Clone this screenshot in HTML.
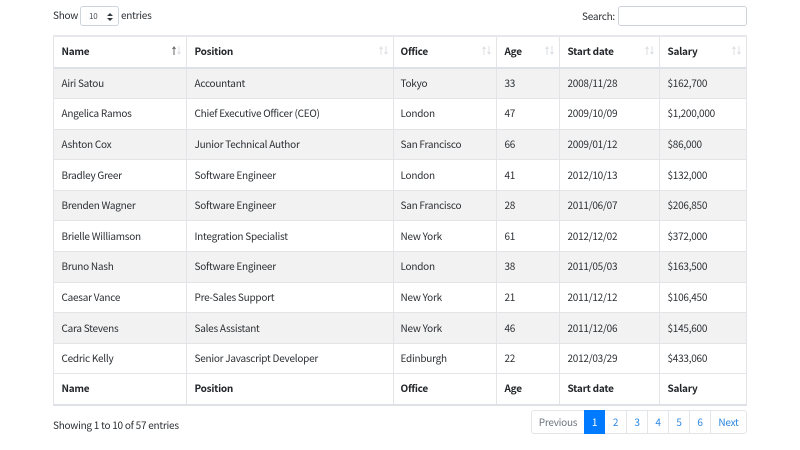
<!DOCTYPE html>
<html><head><meta charset="utf-8"><style>
html,body{margin:0;padding:0;width:800px;height:450px;overflow:hidden;background:#fff;}
body{font-family:"Noto Sans CJK SC","Liberation Sans",sans-serif;font-size:10px;letter-spacing:-0.25px;color:#2b2f33;position:relative;}
.a{position:absolute;white-space:nowrap;line-height:14px;}
table{position:absolute;left:53px;top:35px;width:694px;border-collapse:collapse;table-layout:fixed;border:1px solid #e2e4e7;line-height:14px;}
th,td{padding:0 0 1px 7.5px;border:1px solid #e2e4e7;text-align:left;height:30.6px;box-sizing:border-box;white-space:nowrap;position:relative;}
th:nth-child(3),td:nth-child(3){padding-left:6.5px;}
thead th{border-top:2px solid #e6e8eb;border-bottom:2px solid #dee2e6;height:32px;padding-bottom:3px;}
tfoot th{border-bottom:2px solid #dee2e6;}
th{font-weight:bold;color:#212529;}
tbody tr:nth-child(odd) td{background:#f2f2f2;}
.s{position:absolute;right:5px;top:9px;display:block;}
.sel{position:absolute;left:80px;top:6px;width:37px;height:18px;border:1px solid #ced4da;border-radius:3px;font-size:8px;line-height:19px;text-indent:8px;color:#495057;}
.sel svg{position:absolute;left:26px;top:6px;}
.inp{position:absolute;left:618px;top:6px;width:127px;height:18px;border:1px solid #ced4da;border-radius:3px;}
.pg{position:absolute;left:531px;top:410px;height:22px;display:flex;border:1px solid #e3e6e9;border-radius:3px;}
.pg span{display:block;line-height:22px;text-align:center;color:#2a86e0;border-left:1px solid #e3e6e9;box-sizing:border-box;height:22px;}
.pg span:first-child{border-left:0;color:#6c757d;}
.pg span.on{background:#007bff;color:#fff;height:24px;margin-top:-1px;line-height:24px;border:0;}
</style></head><body>
<div class="a" style="left:53px;top:8px;">Show</div>
<div class="sel">10<svg width="6" height="8" viewBox="0 0 6 8"><path d="M3 0L6 3H0ZM3 8L0 5H6Z" fill="#343a40"/></svg></div>
<div class="a" style="left:121px;top:8px;">entries</div>
<div class="a" style="left:582px;top:9px;">Search:</div>
<div class="inp"></div>
<table>
<colgroup><col style="width:133px"><col style="width:207px"><col style="width:103px"><col style="width:63px"><col style="width:100px"><col style="width:87px"></colgroup>
<thead><tr>
<th>Name<svg class="s" width="9" height="9" viewBox="0 0 9 9" fill="none" stroke-width="1"><path d="M2 9V1M0.5 3L2 1L3.5 3" stroke="#666"/><path d="M7 0V8M5.5 6L7 8L8.5 6" stroke="#dcdfe2"/></svg></th>
<th>Position<svg class="s" width="9" height="9" viewBox="0 0 9 9" fill="none"><path d="M2 9V1M0.5 3L2 1L3.5 3M7 0V8M5.5 6L7 8L8.5 6" stroke="#dcdfe2"/></svg></th>
<th>Office<svg class="s" width="9" height="9" viewBox="0 0 9 9" fill="none"><path d="M2 9V1M0.5 3L2 1L3.5 3M7 0V8M5.5 6L7 8L8.5 6" stroke="#dcdfe2"/></svg></th>
<th>Age<svg class="s" width="9" height="9" viewBox="0 0 9 9" fill="none"><path d="M2 9V1M0.5 3L2 1L3.5 3M7 0V8M5.5 6L7 8L8.5 6" stroke="#dcdfe2"/></svg></th>
<th>Start date<svg class="s" width="9" height="9" viewBox="0 0 9 9" fill="none"><path d="M2 9V1M0.5 3L2 1L3.5 3M7 0V8M5.5 6L7 8L8.5 6" stroke="#dcdfe2"/></svg></th>
<th>Salary<svg class="s" width="9" height="9" viewBox="0 0 9 9" fill="none"><path d="M2 9V1M0.5 3L2 1L3.5 3M7 0V8M5.5 6L7 8L8.5 6" stroke="#dcdfe2"/></svg></th>
</tr></thead>
<tbody>
<tr><td>Airi Satou</td><td>Accountant</td><td>Tokyo</td><td>33</td><td>2008/11/28</td><td>$162,700</td></tr>
<tr><td>Angelica Ramos</td><td>Chief Executive Officer (CEO)</td><td>London</td><td>47</td><td>2009/10/09</td><td>$1,200,000</td></tr>
<tr><td>Ashton Cox</td><td>Junior Technical Author</td><td>San Francisco</td><td>66</td><td>2009/01/12</td><td>$86,000</td></tr>
<tr><td>Bradley Greer</td><td>Software Engineer</td><td>London</td><td>41</td><td>2012/10/13</td><td>$132,000</td></tr>
<tr><td>Brenden Wagner</td><td>Software Engineer</td><td>San Francisco</td><td>28</td><td>2011/06/07</td><td>$206,850</td></tr>
<tr><td>Brielle Williamson</td><td>Integration Specialist</td><td>New York</td><td>61</td><td>2012/12/02</td><td>$372,000</td></tr>
<tr><td>Bruno Nash</td><td>Software Engineer</td><td>London</td><td>38</td><td>2011/05/03</td><td>$163,500</td></tr>
<tr><td>Caesar Vance</td><td>Pre-Sales Support</td><td>New York</td><td>21</td><td>2011/12/12</td><td>$106,450</td></tr>
<tr><td>Cara Stevens</td><td>Sales Assistant</td><td>New York</td><td>46</td><td>2011/12/06</td><td>$145,600</td></tr>
<tr><td>Cedric Kelly</td><td>Senior Javascript Developer</td><td>Edinburgh</td><td>22</td><td>2012/03/29</td><td>$433,060</td></tr>
</tbody>
<tfoot><tr><th>Name</th><th>Position</th><th>Office</th><th>Age</th><th>Start date</th><th>Salary</th></tr></tfoot>
</table>
<div class="a" style="left:53px;top:418px;">Showing 1 to 10 of 57 entries</div>
<div class="pg"><span style="width:52px">Previous</span><span class="on" style="width:21px">1</span><span style="width:21px;border-left:0">2</span><span style="width:21px">3</span><span style="width:21px">4</span><span style="width:21px">5</span><span style="width:21px">6</span><span style="width:36px">Next</span></div>
</body></html>
